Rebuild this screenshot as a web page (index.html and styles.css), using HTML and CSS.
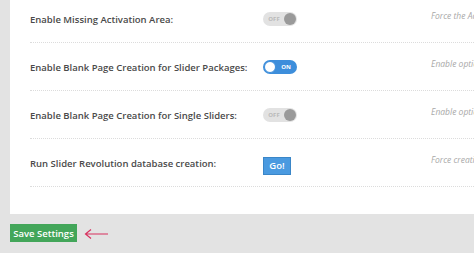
FILE: index.html
```
<!DOCTYPE html>
<html lang="en">

<head>
    <meta charset="UTF-8">
    <meta name="viewport" content="width=device-width, initial-scale=1.0">
    <title>Global Settings</title>
    <link rel="stylesheet" href="styles.css">
</head>

<body>
    <div class="panel">
        <div class="row">
            <span class="label">Enable Missing Activation Area:</span>
            <div class="control">
                <span class="toggle off"><span class="toggle-text">OFF</span><span class="knob"></span></span>
            </div>
            <span class="desc">Force the Activation Area to be shown</span>
        </div>
        <div class="row">
            <span class="label">Enable Blank Page Creation for Slider Packages:</span>
            <div class="control">
                <span class="toggle on"><span class="knob"></span><span class="toggle-text">ON</span></span>
            </div>
            <span class="desc">Enable option to create blank pages</span>
        </div>
        <div class="row">
            <span class="label">Enable Blank Page Creation for Single Sliders:</span>
            <div class="control">
                <span class="toggle off"><span class="toggle-text">OFF</span><span class="knob"></span></span>
            </div>
            <span class="desc">Enable option to create blank pages</span>
        </div>
        <div class="row">
            <span class="label">Run Slider Revolution database creation:</span>
            <div class="control">
                <button class="go-btn">Go!</button>
            </div>
            <span class="desc">Force creation of the database tables</span>
        </div>
    </div>

    <div class="footer">
        <button class="save-btn">Save Settings</button>
        <svg class="arrow" width="26" height="12" viewBox="0 0 26 12">
            <path d="M24 6 H2 M7 1.5 L1.5 6 L7 10.5" fill="none" stroke="#d8315f" stroke-width="1.2" />
        </svg>
    </div>
</body>

</html>
```

FILE: styles.css
```
body {
    margin: 0;
    background-color: #e3e3e3;
    font-family: "Open Sans", "Liberation Sans", sans-serif;
    overflow: hidden;
}

.panel {
    margin-top: -5px;
    margin-left: 10px;
    width: 520px;
    background-color: #fff;
    padding: 0 0 27px 20px;
}

.row {
    display: grid;
    grid-template-columns: 233px 168px 1fr;
    height: 47px;
    border-bottom: 1px dotted #dcdcdc;
    align-items: center;
}

.label {
    font-size: 9.5px;
    font-weight: 600;
    color: #4a4a4a;
    white-space: nowrap;
    margin-top: 2px;
}

.desc {
    font-size: 8.5px;
    font-style: italic;
    color: #a8a8a8;
    white-space: nowrap;
    margin-top: -6px;
}

.control {
    display: flex;
    align-items: center;
}

.toggle {
    display: flex;
    align-items: center;
    width: 34px;
    height: 14px;
    border-radius: 7px;
    box-sizing: border-box;
    padding: 0 1px;
}

.toggle-text {
    font-size: 6px;
    font-weight: 700;
    flex: 1;
    text-align: center;
}

.toggle .knob {
    width: 12px;
    height: 12px;
    border-radius: 50%;
}

.toggle.off {
    background-color: #e2e2e2;
}

.toggle.off .toggle-text {
    color: #b9b9b9;
}

.toggle.off .knob {
    background-color: #9a9a9a;
}

.toggle.on {
    background-color: #3d8edb;
}

.toggle.on .toggle-text {
    color: #fff;
}

.toggle.on .knob {
    background-color: #fff;
    box-sizing: border-box;
    border: 1px solid #3d8edb;
}

.go-btn {
    margin-top: 6px;
    background-color: #4a9ae0;
    border: 1px solid #3a86c8;
    color: #fff;
    font-family: inherit;
    font-size: 9.5px;
    font-weight: 600;
    width: 28px;
    height: 18px;
    padding: 0;
}

.footer {
    display: flex;
    align-items: center;
    padding: 10px 0 0 10px;
}

.save-btn {
    background-color: #43a65a;
    border: none;
    color: #fff;
    font-family: inherit;
    font-size: 9.5px;
    font-weight: 600;
    width: 67px;
    height: 18px;
    padding: 0;
}

.arrow {
    margin-left: 7px;
    margin-top: 1px;
}
```
